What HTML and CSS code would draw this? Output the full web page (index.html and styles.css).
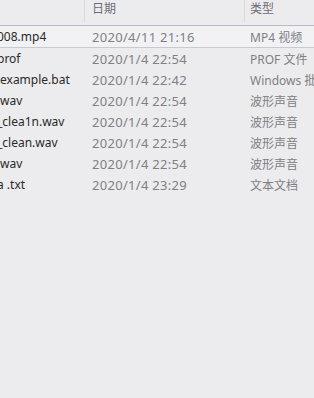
FILE: index.html
```html
<!DOCTYPE html>
<html lang="zh">
<head>
    <meta charset="UTF-8">
    <title>文件列表</title>
    <link rel="stylesheet" href="styles.css">
</head>
<body>
    <div class="liste">
        <div class="baslik">
            <div class="hucre ad"></div>
            <div class="hucre tarih">日期</div>
            <div class="hucre tur">类型</div>
        </div>
        <div class="satir secili">
            <div class="hucre ad"><span class="kirp">008.mp4</span></div>
            <div class="hucre tarih">2020/4/11 21:16</div>
            <div class="hucre tur">MP4 视频</div>
        </div>
        <div class="satir">
            <div class="hucre ad"><span class="kirp">prof</span></div>
            <div class="hucre tarih">2020/1/4 22:54</div>
            <div class="hucre tur">PROF 文件</div>
        </div>
        <div class="satir">
            <div class="hucre ad">example.bat</div>
            <div class="hucre tarih">2020/1/4 22:42</div>
            <div class="hucre tur">Windows 批处理文件</div>
        </div>
        <div class="satir">
            <div class="hucre ad">wav</div>
            <div class="hucre tarih">2020/1/4 22:54</div>
            <div class="hucre tur">波形声音</div>
        </div>
        <div class="satir">
            <div class="hucre ad"><span class="kirp">_clea1n.wav</span></div>
            <div class="hucre tarih">2020/1/4 22:54</div>
            <div class="hucre tur">波形声音</div>
        </div>
        <div class="satir">
            <div class="hucre ad"><span class="kirp">_clean.wav</span></div>
            <div class="hucre tarih">2020/1/4 22:54</div>
            <div class="hucre tur">波形声音</div>
        </div>
        <div class="satir">
            <div class="hucre ad">wav</div>
            <div class="hucre tarih">2020/1/4 22:54</div>
            <div class="hucre tur">波形声音</div>
        </div>
        <div class="satir">
            <div class="hucre ad"><span class="kirp">a .txt</span></div>
            <div class="hucre tarih">2020/1/4 23:29</div>
            <div class="hucre tur">文本文档</div>
        </div>
    </div>
</body>
</html>
```

FILE: styles.css
```css
body {
    margin: 0;
    padding: 0;
    background-color: #ececee;
    font-family: "Noto Sans", "Noto Sans CJK SC", sans-serif;
    font-size: 12px;
    color: #2a2a2a;
    overflow: hidden;
}
.liste {
    width: 314px;
}
.baslik, .satir {
    display: grid;
    grid-template-columns: 84px 160px 70px;
    height: 21px;
    align-items: center;
}
.baslik {
    height: 26px;
    border-bottom: 1px solid #b4bccb;
    color: #6d6d78;
    box-sizing: border-box;
}
.baslik .hucre {
    height: 22px;
    line-height: 17px;
    align-self: start;
}
.baslik .tarih {
    border-left: 1px solid #dadade;
    padding-left: 7px;
}
.baslik .tur {
    border-left: 1px solid #dadade;
    padding-left: 5px;
}
.hucre {
    white-space: nowrap;
    overflow: hidden;
}
.satir .tarih {
    padding-left: 8px;
    font-size: 13px;
    letter-spacing: 0.3px;
    color: #808084;
}
.satir .tur {
    padding-left: 6px;
    color: #808084;
}
.secili {
    background-color: #f2f2f4;
    border-bottom: 1px solid #c5cad4;
}
.kirp {
    display: inline-block;
    margin-left: -3px;
}
```
